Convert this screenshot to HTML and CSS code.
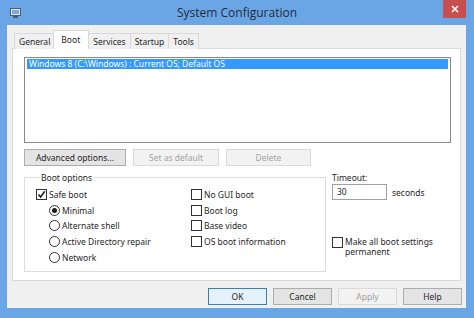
FILE: index.html
```html
<!DOCTYPE html>
<html>
<head>
    <meta name="viewport" content="width=device-width, initial-scale=1" />
    <title>System Configuration</title>
    <link rel="stylesheet" href="styles.css">
</head>
<body>

<div class="window">
    <div class="titlebar">
        <div class="titlebar_left">
            <svg class="app_icon" width="11" height="10" viewBox="0 0 11 10">
                <rect x="0.5" y="0.5" width="10" height="7" fill="#dfe8f2" stroke="#4a5d73"/>
                <rect x="2" y="2" width="7" height="4" fill="#7fa9d6"/>
                <rect x="3" y="8" width="5" height="2" fill="#4a5d73"/>
            </svg>
        </div>
        <div class="title">System Configuration</div>
        <div class="titlebar_right">
            <div class="close_btn">
                <svg width="8" height="8" viewBox="0 0 8 8">
                    <path d="M1 1 L7 7 M7 1 L1 7" stroke="white" stroke-width="1.6"/>
                </svg>
            </div>
        </div>
    </div>

    <div class="client">
        <div class="tabs">
            <div class="tab">General</div>
            <div class="tab tab--active">Boot</div>
            <div class="tab">Services</div>
            <div class="tab">Startup</div>
            <div class="tab">Tools</div>
        </div>

        <div class="panel">
            <div class="os_list">
                <div class="os_item os_item--selected">Windows 8 (C:\Windows) : Current OS; Default OS</div>
            </div>

            <div class="list_buttons">
                <div class="btn btn--advanced">Advanced options...</div>
                <div class="btn btn--disabled btn--default">Set as default</div>
                <div class="btn btn--disabled btn--delete">Delete</div>
            </div>

            <div class="options_row">
                <fieldset class="group">
                    <legend>Boot options</legend>
                    <div class="group_cols">
                        <div class="col">
                            <div class="opt"><span class="check check--on"><svg width="9" height="9" viewBox="0 0 9 9"><path d="M1.5 4.5 L3.6 7 L7.8 1.2" fill="none" stroke="#1a1a1a" stroke-width="1.5"/></svg></span>Safe boot</div>
                            <div class="opt opt--indent"><span class="radio radio--on"></span>Minimal</div>
                            <div class="opt opt--indent"><span class="radio"></span>Alternate shell</div>
                            <div class="opt opt--indent"><span class="radio"></span>Active Directory repair</div>
                            <div class="opt opt--indent"><span class="radio"></span>Network</div>
                        </div>
                        <div class="col">
                            <div class="opt"><span class="check"></span>No GUI boot</div>
                            <div class="opt"><span class="check"></span>Boot log</div>
                            <div class="opt"><span class="check"></span>Base video</div>
                            <div class="opt"><span class="check"></span>OS boot information</div>
                        </div>
                    </div>
                </fieldset>

                <div class="side">
                    <div class="timeout_label">Timeout:</div>
                    <div class="timeout_row">
                        <div class="timeout_input">30</div>
                        <span class="seconds">seconds</span>
                    </div>
                    <div class="permanent">
                        <span class="check"></span>
                        <span class="permanent_text">Make all boot settings<br>permanent</span>
                    </div>
                </div>
            </div>
        </div>

        <div class="footer">
            <div class="btn btn--footer btn--focus">OK</div>
            <div class="btn btn--footer">Cancel</div>
            <div class="btn btn--footer btn--disabled">Apply</div>
            <div class="btn btn--footer">Help</div>
        </div>
    </div>
</div>

</body>
</html>
```

FILE: styles.css
```css
body {
    margin: 0;
    font-family: 'Noto Sans', 'Open Sans', sans-serif;
    font-size: 8.5px;
    color: #262626;
}

.window {
    width: 474px;
    height: 318px;
    background-color: #6aa5e6;
    overflow: hidden;
}

.titlebar {
    height: 25px;
    display: grid;
    grid-template-columns: 1fr auto 1fr;
    align-items: start;
}

.titlebar_left {
    padding: 8px 0 0 10px;
}

.title {
    font-size: 12px;
    color: #222c3a;
    line-height: 26px;
    font-family: 'Open Sans', 'Noto Sans', sans-serif;
}

.titlebar_right {
    display: flex;
    justify-content: flex-end;
    padding-right: 8px;
}

.close_btn {
    width: 23px;
    height: 18px;
    background-color: #c74f4f;
    display: flex;
    align-items: center;
    justify-content: center;
}

.client {
    margin-left: 7px;
    width: 459px;
    height: 283px;
    background-color: #f0f0f0;
}

.tabs {
    display: flex;
    padding: 5px 0 0 7px;
    height: 19px;
    align-items: flex-end;
    position: relative;
    z-index: 1;
}

.tab {
    height: 16px;
    line-height: 15px;
    padding: 0 4px;
    border: 1px solid #d9d9d9;
    border-bottom: none;
    background-color: #f0f0f0;
    box-sizing: border-box;
    margin-right: -1px;
}

.tab--active {
    height: 19px;
    line-height: 17px;
    background-color: white;
    margin: 0 -1px 0 -1px;
    padding: 0 8px 0 7px;
    z-index: 2;
}

.panel {
    margin: -1px 5px 0 5px;
    height: 233px;
    box-sizing: border-box;
    border: 1px solid #d9d9d9;
    background-color: white;
    padding: 8px 9px 0 11px;
}

.os_list {
    height: 86px;
    box-sizing: border-box;
    border: 1px solid #8a8a8a;
    padding: 1px 2px;
}

.os_item {
    height: 10px;
    line-height: 10px;
    padding-left: 2px;
    white-space: nowrap;
}

.os_item--selected {
    background-color: #3399ff;
    color: white;
}

.list_buttons {
    display: flex;
    gap: 7px;
    margin-top: 6px;
}

.btn {
    height: 17px;
    box-sizing: border-box;
    border: 1px solid #adadad;
    background-color: #e4e4e4;
    text-align: center;
    line-height: 15px;
}

.btn--advanced {
    width: 102px;
}

.btn--default {
    width: 86px;
}

.btn--delete {
    width: 85px;
}

.btn--disabled {
    color: #a3a3a3;
    background-color: #f2f2f2;
    border-color: #dadada;
}

.options_row {
    display: flex;
    margin-top: 6px;
}

.group {
    width: 302px;
    height: 100px;
    box-sizing: border-box;
    margin: 0;
    padding: 4px 0 0 11px;
    border: 1px solid #dcdcdc;
}

.group legend {
    padding: 0 2px;
    margin-left: 3px;
    line-height: 11px;
}

.group_cols {
    display: flex;
}

.col {
    display: flex;
    flex-direction: column;
}

.col:first-child {
    width: 155px;
}

.opt {
    height: 15.6px;
    display: flex;
    align-items: center;
    gap: 2px;
    white-space: nowrap;
}

.opt--indent {
    padding-left: 13px;
}

.check {
    width: 11px;
    height: 11px;
    box-sizing: border-box;
    border: 1px solid #333;
    background-color: white;
    display: inline-flex;
    align-items: center;
    justify-content: center;
    flex-shrink: 0;
}

.radio {
    width: 11px;
    height: 11px;
    box-sizing: border-box;
    border: 1px solid #333;
    border-radius: 50%;
    background-color: white;
    display: inline-flex;
    align-items: center;
    justify-content: center;
}

.radio--on::after {
    content: "";
    width: 5px;
    height: 5px;
    border-radius: 50%;
    background-color: #1a1a1a;
}

.side {
    margin-left: 6px;
}

.timeout_label {
    line-height: 12px;
}

.timeout_row {
    display: flex;
    align-items: center;
    gap: 5px;
}

.timeout_input {
    width: 55px;
    height: 16px;
    box-sizing: border-box;
    border: 1px solid #a0a0a0;
    background-color: white;
    padding-left: 4px;
    line-height: 14px;
}

.permanent {
    display: flex;
    gap: 2px;
    margin-top: 37px;
}

.permanent_text {
    line-height: 10px;
}

.footer {
    display: flex;
    justify-content: flex-end;
    gap: 6px;
    padding: 7px 4px 0 0;
}

.btn--footer {
    width: 59px;
}

.btn--focus {
    border-color: #3c7fb1;
    background-color: #e5f1fb;
}
```
